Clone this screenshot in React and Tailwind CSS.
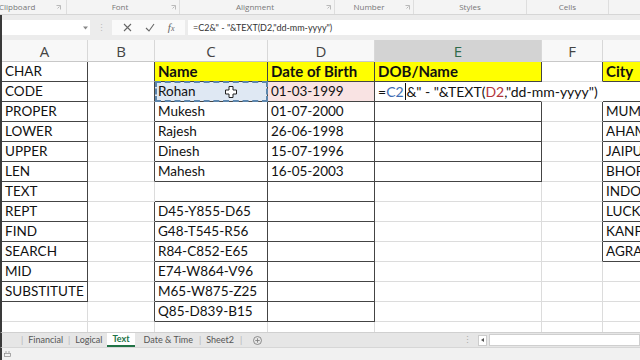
import React from "react";

const LETTERS = ["A", "B", "C", "D", "E", "F", ""];

const DATA = [
  ["CHAR", "", "Name", "Date of Birth", "DOB/Name", "", "City"],
  ["CODE", "", "Rohan", "01-03-1999", "", "", ""],
  ["PROPER", "", "Mukesh", "01-07-2000", "", "", "MUMBAI"],
  ["LOWER", "", "Rajesh", "26-06-1998", "", "", "AHAMDABAD"],
  ["UPPER", "", "Dinesh", "15-07-1996", "", "", "JAIPUR"],
  ["LEN", "", "Mahesh", "16-05-2003", "", "", "BHOPAL"],
  ["TEXT", "", "", "", "", "", "INDORE"],
  ["REPT", "", "D45-Y855-D65", "", "", "", "LUCKNOW"],
  ["FIND", "", "G48-T545-R56", "", "", "", "KANPUR"],
  ["SEARCH", "", "R84-C852-E65", "", "", "", "AGRA"],
  ["MID", "", "E74-W864-V96", "", "", "", ""],
  ["SUBSTITUTE", "", "M65-W875-Z25", "", "", "", ""],
  ["", "", "Q85-D839-B15", "", "", "", ""],
  ["", "", "", "", "", "", ""],
];

function bordered(r, c) {
  if (r < 0 || c < 0 || r > 13 || c > 6) return false;
  if (c === 0 && r <= 11) return true;
  if (r === 0 && (c === 2 || c === 3 || c === 4 || c === 6)) return true;
  if ((c === 2 || c === 3) && r >= 1 && r <= 5) return true;
  if (c === 4 && r >= 2 && r <= 5) return true;
  if (c === 3 && r === 6) return true;
  if ((c === 2 || c === 3) && r >= 7 && r <= 12) return true;
  if (c === 6 && r >= 2 && r <= 9) return true;
  return false;
}

function PlusCursor() {
  return (
    <svg width="12" height="12" viewBox="0 0 12 12" className="absolute left-[70px] top-[4px] z-20">
      <path d="M4 0.5h4v3.5h3.5v4H8v3.5H4V8H0.5V4H4z" fill="#fff" stroke="#222" strokeWidth="1" />
    </svg>
  );
}

function Cell({ r, c, text }) {
  const darkR = bordered(r, c) || bordered(r, c + 1);
  const darkB = bordered(r, c) || bordered(r + 1, c);
  let rb = darkR ? "border-r-[#444]" : "border-r-[#dcdcdc]";
  if (r === 1 && (c === 4 || c === 5)) rb = "border-r-transparent";
  const bb = darkB ? "border-b-[#444]" : "border-b-[#dcdcdc]";
  const yellow = r === 0 && (c === 2 || c === 3 || c === 4 || c === 6);
  let bg = yellow ? "bg-[#ffff00]" : "bg-white";
  if (r === 1 && c === 3) bg = "bg-[#f9e3e3]";
  if (r === 1 && c === 2) bg = "bg-[#dfe8f3]";
  const font = yellow ? "font-bold text-[15px]" : "text-[13.5px]";
  return (
    <div className={`relative h-[20px] border-r border-b ${rb} ${bb} ${bg} ${font} pl-[3px] flex items-center whitespace-nowrap overflow-visible leading-none text-[#111]`}>
      {r === 1 && c === 2 && (
        <div className="absolute left-0 top-[-1px] right-[-1px] bottom-[-1px] border-2 border-dashed border-[#5c86ad]" />
      )}
      {r === 1 && c === 2 && <PlusCursor />}
      {r === 1 && c === 4 ? (
        <span className="relative z-10 flex items-center text-[14px]">
          <span>=</span>
          <span className="text-[#3d6db4]">C2</span>
          <span className="inline-block w-px h-[17px] bg-[#111] mx-[1px]" />
          <span>{'&" - "&TEXT('}</span>
          <span className="text-[#b3343a]">D2</span>
          <span>{',"dd-mm-yyyy")'}</span>
        </span>
      ) : (
        <span className="relative z-10">{text}</span>
      )}
    </div>
  );
}

function Launcher() {
  return (
    <svg width="5" height="5" viewBox="0 0 5 5">
      <path d="M0.5 0.5h4v4" fill="none" stroke="#aaa" strokeWidth="0.8" />
      <path d="M1.5 3.5l2-2" stroke="#aaa" strokeWidth="0.8" />
    </svg>
  );
}

export default function App() {
  return (
    <div className="w-[640px] h-[360px] overflow-hidden bg-white flex flex-col font-['Lato',sans-serif]">
      {/* ribbon group labels */}
      <div className="h-[15px] shrink-0 bg-[#f4f4f4] border-b border-[#d6d6d6] flex items-center font-['Open_Sans',sans-serif] text-[8px] text-[#777]">
        <div className="w-[67px] h-full flex items-center border-r border-[#dedede] relative">
          <span className="ml-[-1px]">Clipboard</span>
          <span className="absolute right-[5px] top-[5px]"><Launcher /></span>
        </div>
        <div className="w-[113px] h-full flex items-center justify-center border-r border-[#dedede] relative">
          <span className="mr-[6px]">Font</span>
          <span className="absolute right-[3px] top-[5px]"><Launcher /></span>
        </div>
        <div className="w-[155px] h-full flex items-center justify-center border-r border-[#dedede] relative">
          <span className="mr-[4px]">Alignment</span>
          <span className="absolute right-[3px] top-[5px]"><Launcher /></span>
        </div>
        <div className="w-[79px] h-full flex items-center justify-center border-r border-[#dedede] relative">
          <span className="mr-[10px]">Number</span>
          <span className="absolute right-[3px] top-[5px]"><Launcher /></span>
        </div>
        <div className="w-[113px] h-full flex items-center justify-center border-r border-[#dedede]">
          <span>Styles</span>
        </div>
        <div className="w-[82px] h-full flex items-center justify-center border-r border-[#dedede]">
          <span>Cells</span>
        </div>
      </div>

      {/* formula bar */}
      <div className="h-[25px] shrink-0 bg-[#ececec] border-l-2 border-[#3a3a3a] flex items-center">
        <div className="w-[88px] h-[15px] bg-white flex items-center justify-end pr-[2px]">
          <svg width="5" height="4" viewBox="0 0 5 4"><path d="M0 0.5h5L2.5 3.5z" fill="#888" /></svg>
        </div>
        <div className="w-[22px] flex justify-center text-[#bbb] text-[9px]">⋮</div>
        <div className="w-[73px] h-[15px] bg-[#fafafa] flex items-center justify-around px-[4px] text-[#666]">
          <svg width="9" height="9" viewBox="0 0 9 9"><path d="M1 1l7 7M8 1L1 8" stroke="#666" strokeWidth="1.1" /></svg>
          <svg width="10" height="9" viewBox="0 0 10 9"><path d="M1 5l3 3 5-7" fill="none" stroke="#666" strokeWidth="1.1" /></svg>
          <span className="font-['Liberation_Serif',serif] italic text-[11px] leading-none">f<span className="text-[8px]">x</span></span>
        </div>
        <div className="flex-1 h-[15px] ml-[3px] bg-white flex items-center pl-[5px] text-[9px] text-[#333] whitespace-nowrap">
          {'=C2&" - "&TEXT(D2,"dd-mm-yyyy")'}
        </div>
      </div>

      {/* sheet grid */}
      <div className="shrink-0 border-l-2 border-[#3a3a3a]">
        <div className="grid grid-cols-[86px_67px_113px_107px_167px_61px_100px] h-[22px] bg-[#f8f8f8] border-b border-[#c8c8c8] font-['Open_Sans',sans-serif] text-[15px] text-[#444]">
          {LETTERS.map((l, i) => (
            <div
              key={i}
              className={`flex items-center justify-center border-r border-[#d8d8d8] ${i === 4 ? "bg-[#d3d3d3] text-[#2f6b4a]" : ""}`}
            >
              {l}
            </div>
          ))}
        </div>
        <div className="grid grid-cols-[86px_67px_113px_107px_167px_61px_100px]">
          {DATA.map((row, r) =>
            row.map((t, c) => <Cell key={`${r}-${c}`} r={r} c={c} text={t} />)
          )}
        </div>
      </div>

      {/* sheet tabs */}
      <div className="h-[15px] shrink-0 -mt-[10px] relative z-20 bg-[#e6e6e6] border-t border-[#d0d0d0] border-l-2 border-l-[#3a3a3a] flex items-center text-[9px] text-[#555]">
        <div className="w-[19px]" />
        <span className="text-[#b5b5b5]">|</span>
        <span className="ml-[5px]">Financial</span>
        <span className="ml-[5px] text-[#b5b5b5]">|</span>
        <span className="ml-[5px]">Logical</span>
        <div className="ml-[5px] h-full px-[5px] bg-white flex items-center font-bold text-[#217346] border-b-2 border-[#217346]">Text</div>
        <span className="ml-[9px]">Date &amp; Time</span>
        <span className="ml-[6px] text-[#b5b5b5]">|</span>
        <span className="ml-[5px]">Sheet2</span>
        <span className="ml-[6px] text-[#b5b5b5]">|</span>
        <svg width="9" height="9" viewBox="0 0 9 9" className="ml-[11px]">
          <circle cx="4.5" cy="4.5" r="4" fill="none" stroke="#777" strokeWidth="0.8" />
          <path d="M4.5 2.3v4.4M2.3 4.5h4.4" stroke="#777" strokeWidth="0.8" />
        </svg>
        <div className="flex-1" />
        <span className="text-[#aaa] text-[9px] mr-[6px]">⋮</span>
        <div className="w-[9px] h-[11px] bg-white border border-[#ccc] flex items-center justify-center">
          <svg width="3" height="4" viewBox="0 0 3 4"><path d="M3 0v4L0 2z" fill="#555" /></svg>
        </div>
        <div className="w-[151px] h-[12px] ml-[2px] bg-white border border-[#cfcfcf]" />
      </div>

      {/* status bar */}
      <div className="flex-1 bg-[#f1f1f1] border-t border-[#d6d6d6] border-l-2 border-l-[#3a3a3a] flex items-center pl-[2px]">
        <svg width="7" height="6" viewBox="0 0 7 6">
          <rect x="0.5" y="2.5" width="6" height="3" fill="none" stroke="#888" strokeWidth="0.7" />
          <path d="M1 1h2M4 1h2" stroke="#888" strokeWidth="0.7" />
        </svg>
      </div>
    </div>
  );
}
